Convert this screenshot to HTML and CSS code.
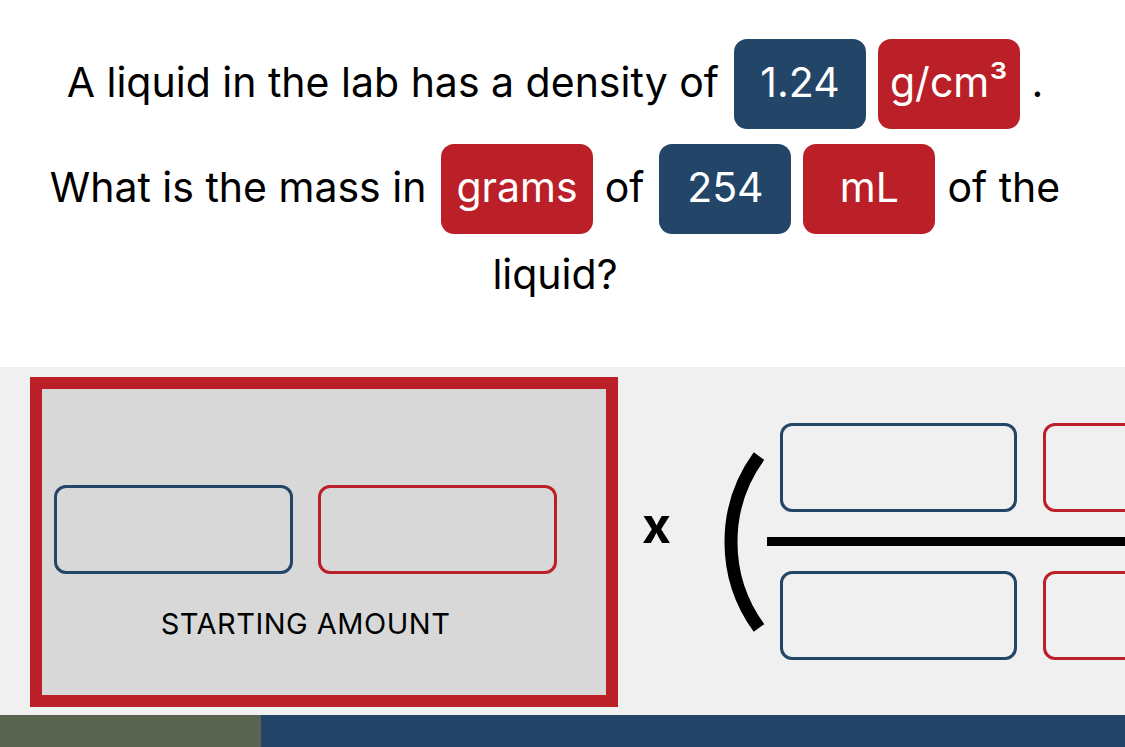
FILE: index.html
```html
<!DOCTYPE html>
<html>
<head>
<meta charset="utf-8">
<link rel="stylesheet" href="styles.css">
</head>
<body>
<div class="page">
  <section class="question">
    <div class="line">
      <span class="word word-before">A liquid in the lab has a density of</span>
      <span class="pill pill-blue">1.24</span>
      <span class="pill pill-red pill-tight">g/cm³</span>
      <span class="word">.</span>
    </div>
    <div class="line">
      <span class="word word-before">What is the mass in</span>
      <span class="pill pill-red">grams</span>
      <span class="word word-before">of</span>
      <span class="pill pill-blue">254</span>
      <span class="pill pill-red">mL</span>
      <span class="word">of the</span>
      <span class="word">liquid?</span>
    </div>
  </section>
  <section class="work">
    <div class="start">
      <div class="units">
        <div class="slot slot-blue"></div>
        <div class="slot slot-red"></div>
      </div>
      <div class="start-label">STARTING AMOUNT</div>
    </div>
    <div class="times">x</div>
    <svg class="paren" width="46" height="184" viewBox="0 0 46 184">
      <path d="M 40 6 A 146 146 0 0 0 40 178" fill="none" stroke="#000" stroke-width="13"/>
    </svg>
    <div class="fraction">
      <div class="frac-row">
        <div class="slot slot-blue"></div>
        <div class="slot slot-red"></div>
      </div>
      <div class="frac-bar"></div>
      <div class="frac-row">
        <div class="slot slot-blue"></div>
        <div class="slot slot-red"></div>
      </div>
    </div>
  </section>
  <footer class="bottom">
    <div class="bottom-left"></div>
    <div class="bottom-right"></div>
  </footer>
</div>
</body>
</html>
```
FILE: styles.css
```css
html, body {
  margin: 0;
  padding: 0;
  background: #ffffff;
}
body {
  width: 1125px;
  height: 747px;
  overflow: hidden;
  font-family: Inter, "Noto Sans", sans-serif;
  color: #000;
}
.page {
  display: flex;
  flex-direction: column;
  height: 747px;
}
.question {
  height: 367px;
  box-sizing: border-box;
  padding: 39px 50px 0 35px;
  display: flex;
  flex-direction: column;
  row-gap: 15px;
}
.line {
  display: flex;
  flex-wrap: wrap;
  justify-content: center;
  align-items: center;
  column-gap: 12px;
  row-gap: 15px;
  font-size: 41px;
  line-height: normal;
}
.word {
  white-space: nowrap;
  margin-bottom: 5px;
}
.word-before {
  margin-right: 3px;
}
.pill {
  box-sizing: border-box;
  height: 90px;
  min-width: 132px;
  padding: 0 15px 4px;
  border-radius: 13px;
  color: #fff;
  display: flex;
  align-items: center;
  justify-content: center;
  white-space: nowrap;
}
.pill-tight {
  padding-left: 12px;
  padding-right: 12px;
}
.pill-blue { background: #224568; }
.pill-red { background: #bb2029; }

.work {
  height: 348px;
  background: #f0f0f0;
  display: flex;
  align-items: center;
  padding-left: 30px;
  overflow: hidden;
  flex-shrink: 0;
}
.start {
  flex-shrink: 0;
  box-sizing: border-box;
  width: 588px;
  height: 330px;
  border: 12px solid #bb2029;
  background: #d8d8d8;
  padding: 96px 49px 0 12px;
  margin-top: 1px;
}
.units {
  display: flex;
  gap: 25px;
}
.slot {
  box-sizing: border-box;
  width: 239px;
  height: 89px;
  border-radius: 12px;
  border: 3px solid #224568;
  flex-shrink: 0;
}
.slot-red { border-color: #bb2029; }
.start-label {
  margin-top: 32px;
  text-align: center;
  font-size: 29px;
  letter-spacing: 0.5px;
  line-height: normal;
}
.times {
  flex-shrink: 0;
  font-size: 50px;
  font-weight: 700;
  line-height: 1;
  margin: 0 0 32px 24px;
}
.paren {
  flex-shrink: 0;
  margin-left: 48px;
  margin-top: 2px;
}
.fraction {
  flex-shrink: 0;
  display: flex;
  flex-direction: column;
  gap: 25px;
  width: 600px;
  margin-top: 1px;
  margin-left: 2px;
}
.frac-row {
  display: flex;
  gap: 26px;
  padding-left: 13px;
}
.frac-row .slot { width: 237px; }
.frac-bar {
  height: 9px;
  background: #000;
}
.bottom {
  display: flex;
  height: 32px;
  flex-shrink: 0;
}
.bottom-left {
  width: 261px;
  background: #5a6450;
}
.bottom-right {
  flex: 1;
  background: #224568;
}
```
